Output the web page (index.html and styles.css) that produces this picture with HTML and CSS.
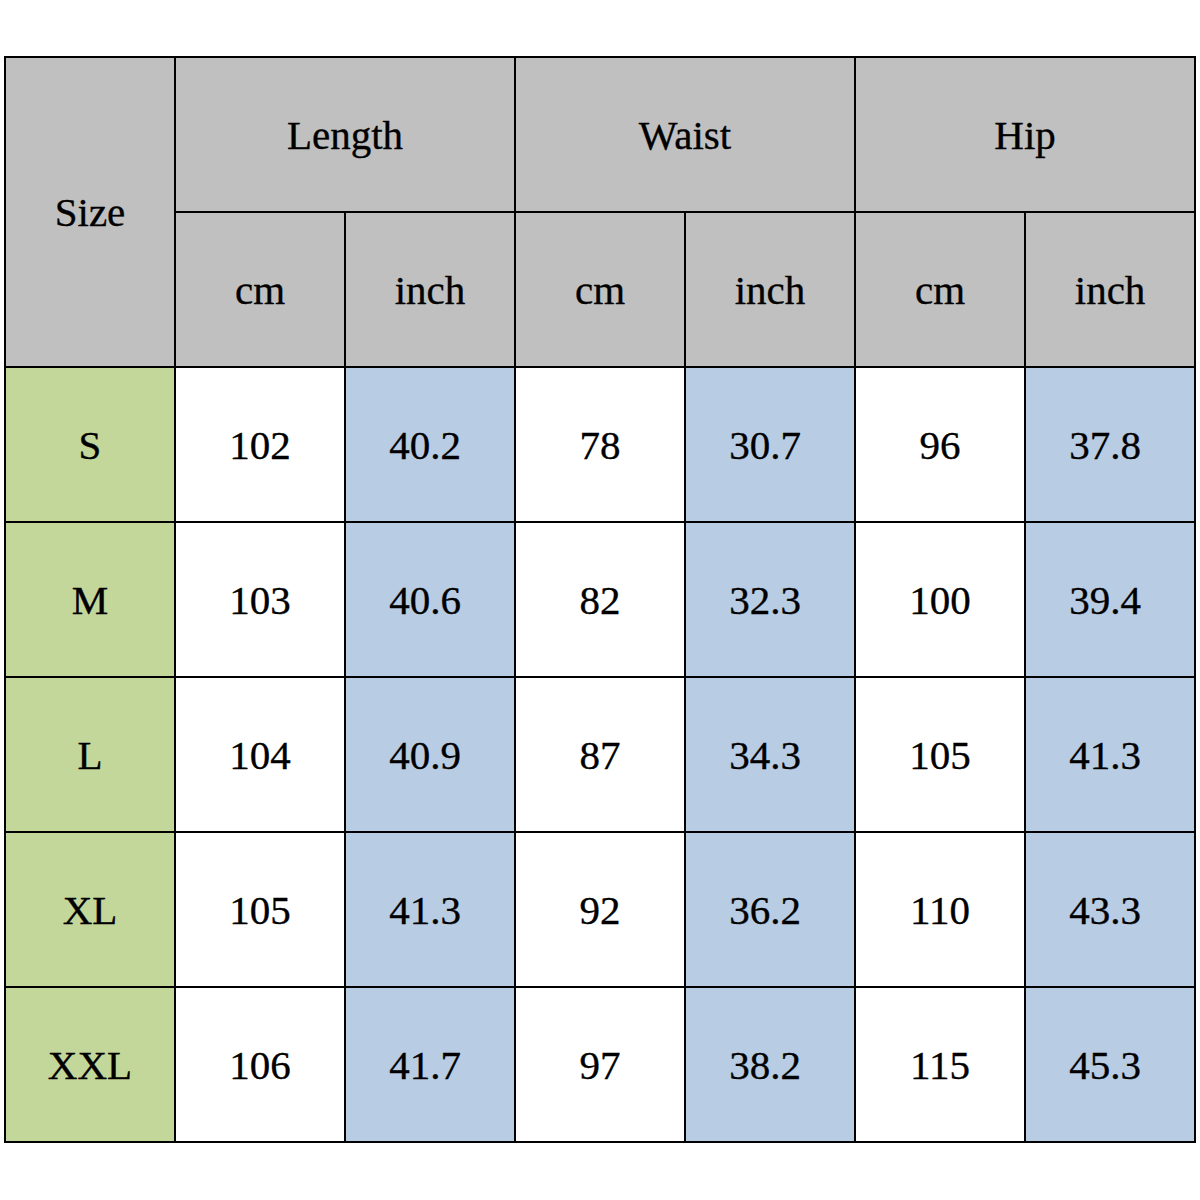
FILE: index.html
```html
<!DOCTYPE html>
<html>
<head>
<meta charset="utf-8">
<link rel="stylesheet" href="styles.css">
</head>
<body>
<div class="page">
<table class="chart">
  <colgroup>
    <col class="c"><col class="c"><col class="c"><col class="c"><col class="c"><col class="c"><col class="c">
  </colgroup>
  <tr class="hrow">
    <td class="hd size" rowspan="2">Size</td>
    <td class="hd" colspan="2">Length</td>
    <td class="hd" colspan="2">Waist</td>
    <td class="hd" colspan="2">Hip</td>
  </tr>
  <tr class="hrow">
    <td class="hd">cm</td><td class="hd">inch</td>
    <td class="hd">cm</td><td class="hd">inch</td>
    <td class="hd">cm</td><td class="hd">inch</td>
  </tr>
  <tr>
    <td class="sz">S</td><td>102</td><td class="in">40.2</td><td>78</td><td class="in">30.7</td><td>96</td><td class="in">37.8</td>
  </tr>
  <tr>
    <td class="sz">M</td><td>103</td><td class="in">40.6</td><td>82</td><td class="in">32.3</td><td>100</td><td class="in">39.4</td>
  </tr>
  <tr>
    <td class="sz">L</td><td>104</td><td class="in">40.9</td><td>87</td><td class="in">34.3</td><td>105</td><td class="in">41.3</td>
  </tr>
  <tr>
    <td class="sz">XL</td><td>105</td><td class="in">41.3</td><td>92</td><td class="in">36.2</td><td>110</td><td class="in">43.3</td>
  </tr>
  <tr>
    <td class="sz">XXL</td><td>106</td><td class="in">41.7</td><td>97</td><td class="in">38.2</td><td>115</td><td class="in">45.3</td>
  </tr>
</table>
</div>
</body>
</html>
```
FILE: styles.css
```css
html, body {
  margin: 0;
  padding: 0;
  background: #ffffff;
}
.page {
  padding: 56px 0 0 4px;
}
.chart {
  border-collapse: collapse;
  table-layout: fixed;
  width: 1192px;
  font-family: "Liberation Serif", "Times New Roman", serif;
  font-size: 41px;
  color: #000;
  -webkit-text-stroke: 0.35px #000;
}
.chart .c {
  width: 170px;
}
.chart td {
  border: 2px solid #000;
  height: 153px;
  padding: 0;
  text-align: center;
  vertical-align: middle;
  background: #ffffff;
}
.chart td.hd {
  background: #c0c0c0;
}
.chart td.sz {
  background: #c4d79b;
}
.chart td.in {
  background: #b8cce4;
  padding-right: 10px;
}
```
